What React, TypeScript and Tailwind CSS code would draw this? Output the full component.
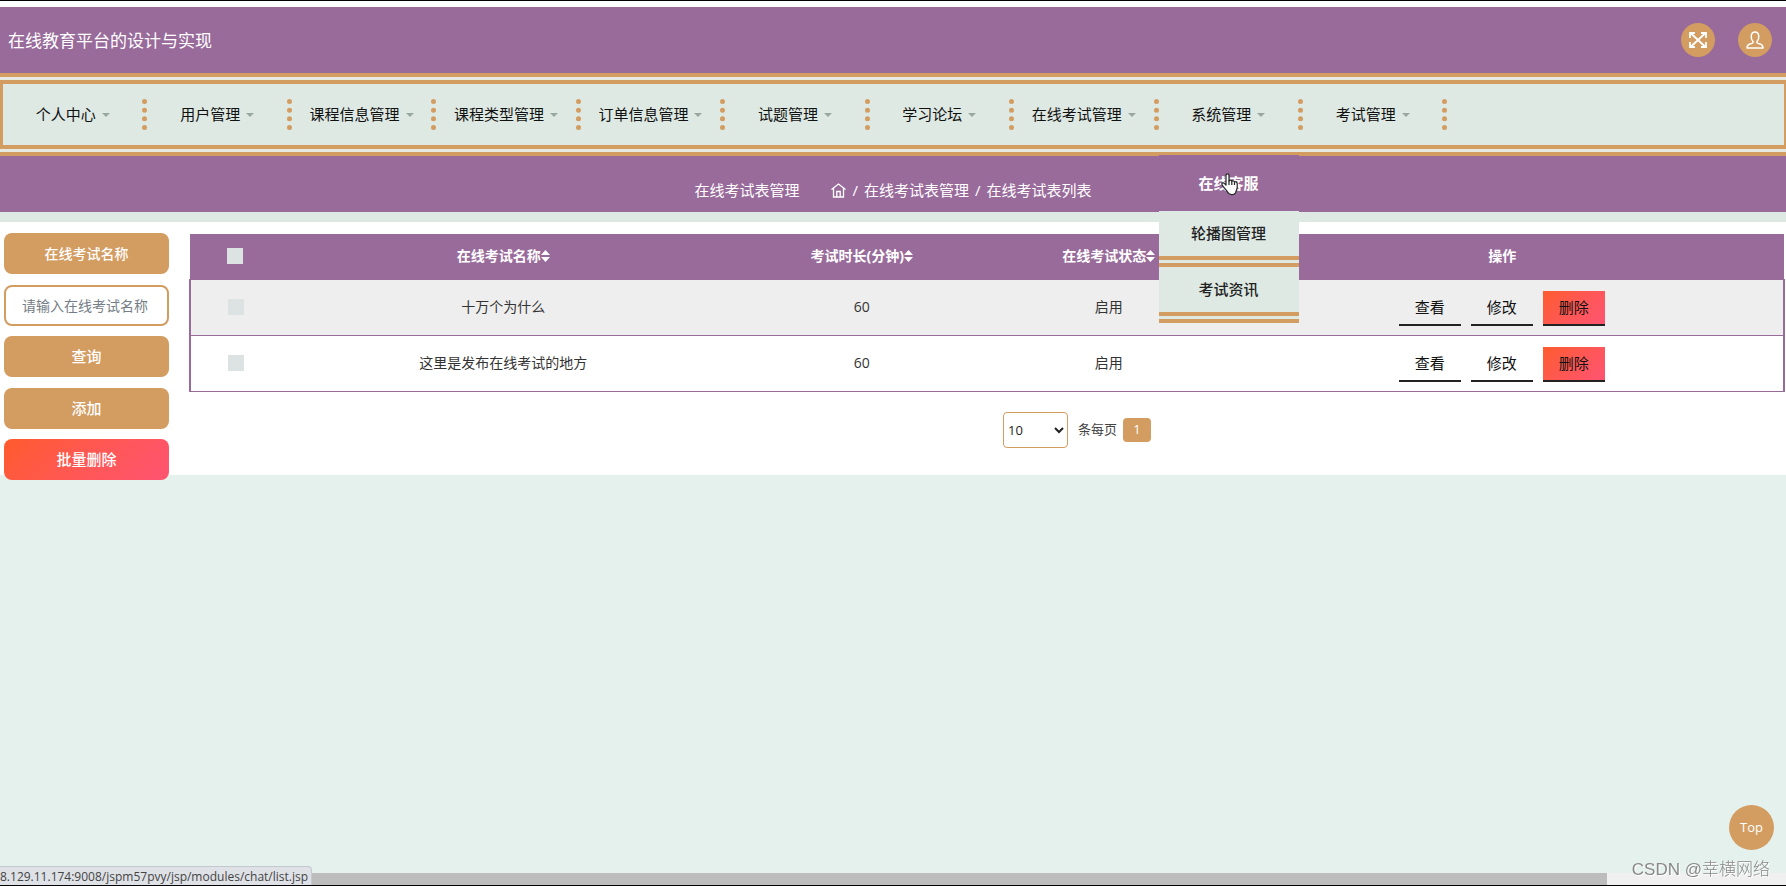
// src/App.tsx
import React from 'react';

const menuItems = [
  '个人中心',
  '用户管理',
  '课程信息管理',
  '课程类型管理',
  '订单信息管理',
  '试题管理',
  '学习论坛',
  '在线考试管理',
  '系统管理',
  '考试管理',
];

const exams = [
  { id: 1, name: '十万个为什么', minutes: 60, status: '启用' },
  { id: 2, name: '这里是发布在线考试的地方', minutes: 60, status: '启用' },
];

function HandCursor() {
  return (
    <svg
      className="pointer-events-none absolute top-[18px] left-[62px]"
      width="18"
      height="23"
      viewBox="0 0 18 23"
      fill="#fff"
      stroke="#222"
      strokeWidth="1.2"
      strokeLinejoin="round"
      aria-hidden="true"
    >
      <path d="M5 2.5C5 .3 8 .3 8 2.5V8c.3-1.4 2.8-1.2 2.8.5.4-1.2 2.7-.9 2.7.8.6-1 2.7-.6 2.7 1.2v4c0 2-1.2 3-1.6 5.2-1.5 2.6-6 2.4-7.6 0C5.5 16.5 2.5 15 1 11.5c-.6-1.600 1.300-2.300 2.400-1.100L5 12z" />
      <path d="M8 7.500V12M10.800 8.500V12M13.500 9.500V12" fill="none" />
    </svg>
  );
}

function SystemMenu() {
  return (
    <ul className="absolute top-14 left-0 z-10 w-[140px] text-center text-[15px]">
      <li className="relative h-14 bg-[#996b9b] font-bold text-white">
        <a href="#chat" className="flex h-full items-center justify-center">
          在线客服
        </a>
        <HandCursor />
      </li>
      {['轮播图管理', '考试资讯'].map((name) => (
        <li
          key={name}
          className="h-14 border-b-[11px] border-double border-[#d39c61] bg-[#dee9e3] font-medium text-[#222]"
        >
          <a href="#menu" className="flex h-full items-center justify-center">
            {name}
          </a>
        </li>
      ))}
    </ul>
  );
}

function Header() {
  return (
    <header className="flex h-[66px] items-center justify-between bg-[#996b9b] pr-[14px] pl-2">
      <h1 className="pt-[2px] text-[17px] text-white">在线教育平台的设计与实现</h1>
      <div className="flex gap-[23px]">
        <button
          aria-label="全屏"
          className="flex size-[34px] items-center justify-center rounded-full bg-[#d39c61]"
        >
          <svg width="18" height="16" viewBox="0 0 18 16" fill="none" stroke="#fff" strokeWidth="1.8">
            <path d="M2 1.500l14 13M16 1.500l-14 13" />
            <path d="M1 6V1h5M12 1h5v5M17 10v5h-5M6 15H1v-5" />
          </svg>
        </button>
        <button
          aria-label="个人"
          className="flex size-[34px] items-center justify-center rounded-full bg-[#d39c61]"
        >
          <svg width="18" height="18" viewBox="0 0 18 18" fill="none" stroke="#fff" strokeWidth="1.5" strokeLinejoin="round">
            <path d="M7 10.500C4.200 7.500 4.500 1 9 1s4.800 6.500 2 9.500c-.4 1.200.3 1.800 1.500 2.100 2.700.6 4.500 1.600 4.500 4.400H1c0-2.800 1.800-3.800 4.500-4.400 1.200-.3 1.900-.9 1.500-2.100z" />
          </svg>
        </button>
      </div>
    </header>
  );
}

function MainMenu() {
  return (
    <div className="border-y-4 border-[#d39c61] bg-[#e6e9df] py-[3px]">
      <nav className="border-y-4 border-r-2 border-l-[3px] border-[#d39c61] bg-[#dee9e3]">
        <ul className="flex h-[61px] w-[81.1%] items-center">
          {menuItems.map((name) => (
            <li
              key={name}
              className="relative flex h-[31px] flex-1 items-center justify-center border-r-[5px] border-dotted border-[#d39c61]"
            >
              <a href="#menu" className="flex items-center gap-[6px] text-[15px] whitespace-nowrap text-[#111]">
                {name}
                <span className="border-x-4 border-t-4 border-x-transparent border-t-[#98a7a2]" />
              </a>
              {name === '系统管理' && <SystemMenu />}
            </li>
          ))}
        </ul>
      </nav>
    </div>
  );
}

function Breadcrumb() {
  return (
    <div className="flex h-14 items-center justify-center gap-8 bg-[#996b9b] pt-3 text-[15px] text-white">
      <h2>在线考试表管理</h2>
      <div className="flex items-center gap-[6px]">
        <a href="#home" aria-label="首页">
          <svg width="15" height="15" viewBox="0 0 15 15" fill="none" stroke="#fff" strokeWidth="1.3">
            <path d="M.500 6.500l7-5.500 7 5.500M2.500 5v9h10V5M5.800 14V8.500h3.400V14" />
          </svg>
        </a>
        <span>/</span>
        <a href="#exam">在线考试表管理</a>
        <span>/</span>
        <span>在线考试表列表</span>
      </div>
    </div>
  );
}

function SearchPanel() {
  return (
    <form className="flex h-[247px] w-[165px] shrink-0 flex-col justify-between text-white">
      <label
        htmlFor="examName"
        className="flex h-[41px] items-center justify-center rounded-lg bg-[#d39c61] text-sm font-medium"
      >
        在线考试名称
      </label>
      <input
        id="examName"
        type="text"
        placeholder="请输入在线考试名称"
        className="h-[41px] w-full rounded-lg border-2 border-[#d39c61] bg-white px-4 text-sm text-gray-700 placeholder:text-[#757d86]"
      />
      <button type="button" className="h-[41px] rounded-lg bg-[#d39c61] text-[15px] font-medium">
        查询
      </button>
      <button type="button" className="h-[41px] rounded-lg bg-[#d39c61] text-[15px] font-medium">
        添加
      </button>
      <button
        type="button"
        className="h-[41px] rounded-lg bg-linear-135 from-[#ff5b2a] to-[#ff5370] text-[15px] font-medium"
      >
        批量删除
      </button>
    </form>
  );
}

function SortIcon() {
  return (
    <svg className="inline-block align-[-1px]" width="9" height="12" viewBox="0 0 9 12" fill="#fff">
      <path d="M4.500 0L9 5H0zM0 7h9l-4.500 5z" />
    </svg>
  );
}

function ExamTable() {
  const box = 'block size-4 mx-auto appearance-none bg-[#dde2e3]';
  const action = 'h-[35px] w-[62px] border-b-2 border-[#222] text-[15px] text-[#111]';

  return (
    <table className="w-full table-fixed border-collapse text-center text-sm text-[#333]">
      <colgroup>
        <col className="w-[90px]" />
        <col className="w-[28%]" />
        <col className="w-[17%]" />
        <col className="w-[14%]" />
        <col />
      </colgroup>
      <thead>
        <tr className="h-[45px] bg-[#996b9b] text-white">
          <th>
            <input type="checkbox" aria-label="全选" className={box} />
          </th>
          <th>
            在线考试名称
            <SortIcon />
          </th>
          <th>
            考试时长(分钟)
            <SortIcon />
          </th>
          <th>
            在线考试状态
            <SortIcon />
          </th>
          <th>操作</th>
        </tr>
      </thead>
      <tbody className="border-x-2 border-[#996b9b]">
        {exams.map((exam) => (
          <tr key={exam.id} className="h-14 border-y border-[#996b9b] odd:bg-[#eeeeee]">
            <td>
              <input type="checkbox" aria-label={exam.name} className={box} />
            </td>
            <td>{exam.name}</td>
            <td>{exam.minutes}</td>
            <td>{exam.status}</td>
            <td>
              <div className="flex justify-center gap-[10px] pt-[3px]">
                <button className={action}>查看</button>
                <button className={action}>修改</button>
                <button className={`${action} bg-linear-135 from-[#ff5b2a] to-[#ff5370]`}>删除</button>
              </div>
            </td>
          </tr>
        ))}
      </tbody>
    </table>
  );
}

function Pagination() {
  return (
    <div className="mt-5 flex items-center justify-center pl-[180px] text-[13px] text-[#444]">
      <select
        aria-label="每页条数"
        className="h-9 w-[65px] rounded border border-[#d39c61] bg-white text-[13px] text-[#222]"
      >
        <option>10</option>
        <option>20</option>
        <option>50</option>
      </select>
      <span className="ml-[10px]">条每页</span>
      <button className="ml-[6px] h-6 w-7 rounded bg-[#d39c61] text-white">1</button>
    </div>
  );
}

export default function App() {
  return (
    <div className="flex min-h-screen flex-col overflow-x-hidden border-y border-black bg-[#e5f1ec] font-['Open_Sans','Noto_Sans_CJK_SC',sans-serif]">
      <div className="bg-white pt-[6px]">
        <Header />
      </div>
      <MainMenu />
      <Breadcrumb />
      <div className="h-[10px] bg-[#dee9e3]" />

      <main className="flex h-[253px] gap-5 bg-white pt-[11px] pr-px pl-1">
        <SearchPanel />
        <div className="min-w-0 flex-1 pt-px">
          <ExamTable />
          <Pagination />
        </div>
      </main>

      {/* Barra de desplazamiento inferior */}
      <div className="mt-auto h-3 bg-[#f0f0f0]">
        <div className="h-full w-[90%] bg-[#bdbdbd]" />
      </div>

      <div className="fixed bottom-px left-0 flex h-[19px] items-center rounded-tr border-t border-r border-[#c5c9cf] bg-[#dee1e6] pt-[2px] pr-[3px] text-xs text-[#444]">
        8.129.11.174:9008/jspm57pvy/jsp/modules/chat/list.jsp
      </div>
      <button className="fixed right-3 bottom-9 size-[45px] rounded-full bg-[#d39c61] text-[13px] font-medium text-white">
        Top
      </button>
      <div className="fixed right-4 bottom-1 font-['Liberation_Sans','Noto_Sans_CJK_SC',sans-serif] text-[17px] font-light text-[#888] [text-shadow:1px_1px_0_#fff]">
        CSDN @幸横网络
      </div>
    </div>
  );
}
